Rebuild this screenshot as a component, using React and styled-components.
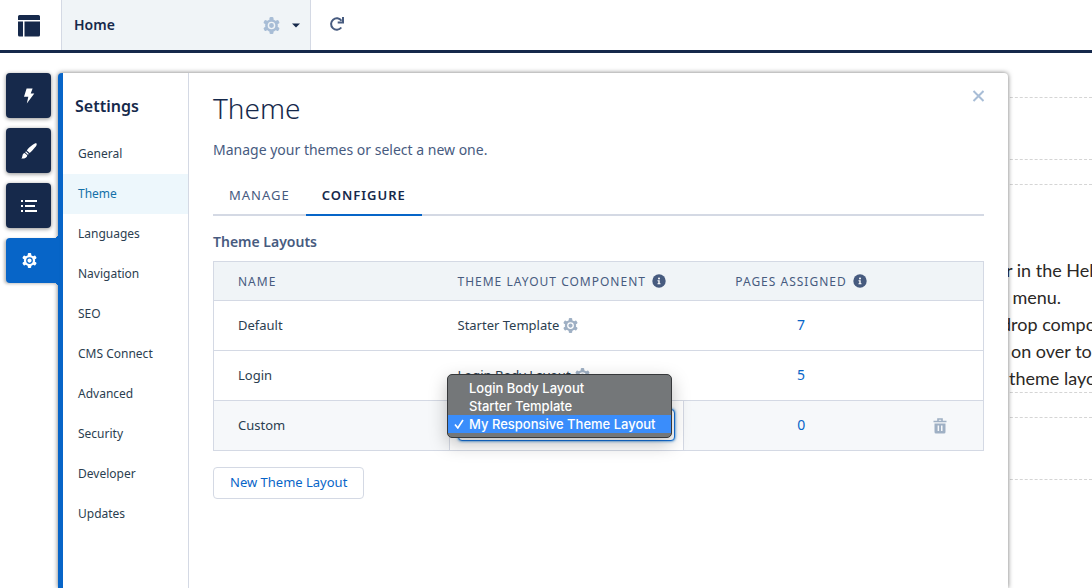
import React, { useState } from "react";
import styled, { createGlobalStyle, css } from "styled-components";

const navy = "#16294b";
const blue = "#0765c8";
const slate = "#475b7f";
const line = "#d4d9e4";

const GlobalStyle = createGlobalStyle`
  * {
    box-sizing: border-box;
  }
  body {
    margin: 0;
    background: #fff;
    color: #2b3e50;
    font-family: "Noto Sans", sans-serif;
    font-size: 13px;
    line-height: 20px;
  }
  button {
    font: inherit;
    border: 0;
    padding: 0;
    background: none;
    cursor: pointer;
  }
  a {
    text-decoration: none;
  }
`;

const Page = styled.div`
  display: flex;
  flex-direction: column;
  height: 100vh;
  overflow: hidden;
`;

const Header = styled.header`
  display: flex;
  flex: none;
  height: 53px;
  border-bottom: 3px solid ${navy};
`;

const Brand = styled.a`
  display: flex;
  align-items: center;
  justify-content: center;
  width: 61px;
  padding: 2px 3px 0 0;
  color: ${navy};
`;

const PageTab = styled.div`
  display: flex;
  align-items: center;
  width: 250px;
  padding: 0 10px 0 12px;
  border: solid ${line};
  border-width: 0 1px;
  background: #f0f4f7;
`;

const PageName = styled.span`
  flex: 1;
  color: ${navy};
  font-size: 14px;
  font-weight: 600;
`;

const IconButton = styled.button`
  display: inline-flex;
  align-items: center;
  justify-content: center;
  vertical-align: middle;
  color: ${(props) => props.$color || "#a8bdd6"};
`;

const CaretButton = styled(IconButton)`
  margin-left: 12px;
`;

const RefreshButton = styled(IconButton)`
  margin-left: 18px;
  padding-bottom: 2px;
`;

const Workspace = styled.div`
  display: flex;
  flex: 1;
  min-height: 0;
`;

const Rail = styled.nav`
  display: flex;
  flex: none;
  flex-direction: column;
  gap: 10px;
  width: 58px;
  padding: 20px 0 0 6px;
`;

const RailButton = styled.button`
  display: flex;
  align-items: center;
  justify-content: center;
  width: 45px;
  height: 45px;
  border-radius: 4px;
  background: ${navy};
  color: #fff;
  box-shadow: 0 1px 4px rgba(0, 0, 0, 0.45);

  ${(props) =>
    props.$active &&
    css`
      position: relative;
      z-index: 2;
      width: 53px;
      padding-right: 7px;
      border-radius: 4px 0 0 4px;
      background: ${blue};
      box-shadow: -2px 1px 3px rgba(0, 0, 0, 0.25);

      &::before,
      &::after {
        content: "";
        position: absolute;
        right: 1px;
        width: 4px;
        height: 4px;
      }
      &::before {
        top: -4px;
        background: radial-gradient(circle at 0 0, transparent 4px, ${blue} 4px);
      }
      &::after {
        bottom: -4px;
        background: radial-gradient(circle at 0 100%, transparent 4px, ${blue} 4px);
      }
    `}
`;

const Panel = styled.section`
  position: relative;
  z-index: 1;
  display: flex;
  flex: 1;
  min-width: 0;
  margin-top: 20px;
  border-left: 5px solid ${blue};
  border-radius: 4px 4px 0 0;
  background: #fff;
  box-shadow: 0 0 5px rgba(0, 0, 0, 0.55);
`;

const SideNav = styled.nav`
  flex: none;
  width: 126px;
  padding-top: 20px;
  border-right: 1px solid ${line};
`;

const SideTitle = styled.h2`
  margin: 0 0 15px;
  padding-left: 12px;
  color: ${navy};
  font-size: 16px;
  line-height: 26px;
  font-weight: 600;
`;

const SideLink = styled.a`
  display: block;
  padding-left: 15px;
  font-size: 12px;
  line-height: 40px;
  color: ${(props) => (props.$active ? "#1470a8" : "#2b3e50")};
  background: ${(props) => (props.$active ? "#edf7fc" : "transparent")};
`;

const Content = styled.div`
  flex: 1;
  min-width: 0;
  padding: 15px 24px;
`;

const TitleRow = styled.div`
  display: flex;
  justify-content: space-between;
  align-items: flex-start;
`;

const Title = styled.h1`
  margin: 0;
  color: ${navy};
  font-size: 28px;
  line-height: 40px;
  font-weight: 300;
`;

const Intro = styled.p`
  margin: 12px 0 14px;
  color: ${slate};
  font-size: 14px;
`;

const Tabs = styled.div`
  display: flex;
  border-bottom: 2px solid ${line};
`;

const Tab = styled.button`
  margin-bottom: -2px;
  padding: 11px 16px 9px;
  border-bottom: 2px solid ${(props) => (props.$active ? blue : "transparent")};
  color: ${(props) => (props.$active ? navy : slate)};
  font-weight: ${(props) => (props.$active ? 600 : 400)};
  letter-spacing: 1px;
  text-transform: uppercase;
`;

const SectionTitle = styled.h3`
  margin: 16px 0 9px;
  color: ${slate};
  font-size: 14px;
  font-weight: 600;
`;

const Table = styled.table`
  width: 100%;
  table-layout: fixed;
  border-collapse: collapse;
  border: 1px solid ${line};
`;

const Th = styled.th`
  height: 39px;
  padding: 2px 0 0 ${(props) => props.$pad || 0}px;
  background: #f0f4f7;
  color: ${slate};
  font-size: 12px;
  font-weight: 400;
  letter-spacing: 1px;
  text-align: ${(props) => props.$align || "left"};
  text-transform: uppercase;
  white-space: nowrap;

  svg {
    margin-left: 6px;
    vertical-align: -2px;
  }
`;

const Row = styled.tr`
  background: ${(props) => (props.$selected ? "#f6f8fa" : "#fff")};
`;

const Td = styled.td`
  height: 50px;
  padding: 0 0 2px ${(props) => props.$pad || 0}px;
  border-top: 1px solid ${line};
  text-align: ${(props) => props.$align || "left"};

  a {
    color: ${blue};
    font-size: 14px;
  }
`;

const EditCell = styled(Td)`
  position: relative;
  padding: 0 8px 2px;
  border: 1px solid ${line};
  background: #fff;
`;

const WithIcon = styled.span`
  display: flex;
  align-items: center;
  gap: 4px;

  button {
    padding-top: 2px;
  }
`;

const LayoutSelect = styled.select`
  display: block;
  appearance: none;
  width: 100%;
  height: 32px;
  padding: 0 12px;
  border: 1px solid #1570d8;
  border-radius: 4px;
  outline: 0;
  background: #fff;
  color: #fff;
  font: inherit;
  box-shadow: 0 0 3px #0070d2;
`;

const Options = styled.ul`
  position: absolute;
  z-index: 3;
  top: -27px;
  left: -3px;
  width: 225px;
  margin: 0;
  padding: 4px 0;
  list-style: none;
  border: 1px solid #36383a;
  border-radius: 5px;
  background: #747779;
  box-shadow: 0 6px 18px rgba(0, 0, 0, 0.25);
`;

const Option = styled.li`
  display: flex;
  align-items: center;
  height: 18px;
  color: #fff;
  background: ${(props) => (props.$checked ? "#3a8dfb" : "transparent")};
  font-family: Inter, sans-serif;
  font-size: 13px;
  font-weight: 500;
  line-height: 16px;
  white-space: nowrap;
`;

const Tick = styled.span`
  display: flex;
  flex: none;
  justify-content: center;
  width: 21px;
`;

const NewButton = styled.button`
  height: 32px;
  margin-top: 16px;
  padding: 0 16px 2px;
  border: 1px solid ${line};
  border-radius: 4px;
  color: ${blue};
`;

const Canvas = styled.main`
  flex: none;
  width: 92px;
  margin-left: -8px;
  padding-top: 44px;
  overflow: hidden;
`;

const Region = styled.div`
  min-height: 63px;
  margin-bottom: 24px;
  padding-top: ${(props) => (props.$filled ? 72 : 0)}px;
  border: dashed #d5d5d5;
  border-width: 1px 0;
`;

const CanvasText = styled.p`
  margin: 0;
  padding-left: ${(props) => props.$indent}px;
  color: #2b2826;
  font-family: Lato, sans-serif;
  font-size: 18px;
  line-height: 27px;
  white-space: nowrap;
`;

// round body with three bars through the centre, which give the six teeth
function GearIcon({ size, hole = "#fff" }) {
  return (
    <svg width={size} height={size} viewBox="-9 -9 18 18" aria-hidden="true">
      <circle r="6.7" fill="currentColor" />
      {[0, 60, 120].map((angle) => (
        <rect
          key={angle}
          x="-2.1"
          y="-9"
          width="4.2"
          height="18"
          rx="1.3"
          fill="currentColor"
          transform={`rotate(${angle})`}
        />
      ))}
      <circle r="3.3" fill="none" stroke={hole} strokeWidth="1.5" />
    </svg>
  );
}

function InfoIcon() {
  return (
    <svg width="14" height="14" viewBox="0 0 14 14" aria-hidden="true">
      <circle cx="7" cy="7" r="6.7" fill={slate} />
      <circle cx="7" cy="4.4" r="1" fill="#fff" />
      <path d="M5.5 6.2h2.2v3h.8v1h-3v-1h.8v-2h-.8z" fill="#fff" />
    </svg>
  );
}

function BrandIcon() {
  return (
    <svg width="22" height="22" viewBox="0 0 22 22" fill="currentColor" aria-hidden="true">
      <path d="M1.5 0h19A1.5 1.5 0 0 1 22 1.5V5H0V1.5A1.5 1.5 0 0 1 1.5 0zM0 6.5h5v15H1.5A1.5 1.5 0 0 1 0 20zM6.5 6.5H22V20a1.5 1.5 0 0 1-1.5 1.5h-14z" />
    </svg>
  );
}

function RefreshIcon() {
  return (
    <svg width="16" height="16" viewBox="0 0 16 16" aria-hidden="true">
      <path d="M12.3 11.5A5.7 5.7 0 1 1 12.5 4.8" fill="none" stroke="currentColor" strokeWidth="2" />
      <path d="M13 1h2v6.5H8.7v-2H13z" fill="currentColor" />
    </svg>
  );
}

function BoltIcon() {
  return (
    <svg width="12" height="16" viewBox="0 0 12 16" fill="currentColor" aria-hidden="true">
      <path d="M3.6.5h6L7.7 5.6h3.6L3.8 15.5l1.5-6.7H1z" />
    </svg>
  );
}

function BrushIcon() {
  return (
    <svg width="16" height="16" viewBox="0 0 16 16" fill="currentColor" aria-hidden="true">
      <path d="M15.5.5c.6.7-.2 2.3-1.2 3.6-1.5 2-3.9 4.7-5.6 6L5.8 7.4C7.2 5.4 9.7 3.2 11.7 1.8 13.2.7 14.9-.1 15.5.5zM5 8.3l2.800 2.600-.9.8L4.200 9.200zM3.6 10l2.6 2.3c.1 2.3-2.5 3.4-5.9 3.2 1.2-1.2.8-2.1 1.3-3.5.3-1 1.1-1.700 2-2z" />
    </svg>
  );
}

function ListIcon() {
  return (
    <svg width="16" height="12" viewBox="0 0 16 12" fill="currentColor" aria-hidden="true">
      <path d="M0 0h2v2H0zM4 0h12v2H4zM0 5h2v2H0zM4 5h10v2H4zM0 10h2v2H0zM4 10h12v2H4z" />
    </svg>
  );
}

function TrashIcon() {
  return (
    <svg width="14" height="16" viewBox="0 0 14 16" aria-hidden="true">
      <path d="M.5 3.5h13M5 3V1h4v2" fill="none" stroke="currentColor" strokeWidth="1.6" />
      <path
        d="M1.5 5.500h11V14a1.5 1.5 0 0 1-1.5 1.5H3A1.5 1.5 0 0 1 1.5 14zM4.6 7.5V13h1.5V7.5zM8 7.5V13h1.5V7.5z"
        fill="currentColor"
        fillRule="evenodd"
      />
    </svg>
  );
}

const sections = [
  "General",
  "Theme",
  "Languages",
  "Navigation",
  "SEO",
  "CMS Connect",
  "Advanced",
  "Security",
  "Developer",
  "Updates",
];

const layouts = [
  { name: "Default", component: "Starter Template", pages: 7 },
  { name: "Login", component: "Login Body Layout", pages: 5 },
];

const options = ["Login Body Layout", "Starter Template", "My Responsive Theme Layout"];

const copy = [
  { text: "r in the Hel", indent: 6 },
  { text: "s menu.", indent: 0 },
  { text: "drop compo", indent: 1 },
  { text: "on over to", indent: 11 },
  { text: "theme layo", indent: 9 },
];

function App() {
  const [choice, setChoice] = useState(options[2]);

  return (
    <>
      <GlobalStyle />
      <Page>
        <Header>
          <Brand href="#home" aria-label="Builder">
            <BrandIcon />
          </Brand>
          <PageTab>
            <PageName>Home</PageName>
            <IconButton aria-label="Page settings">
              <GearIcon size={17} hole="#f0f4f7" />
            </IconButton>
            <CaretButton aria-label="Choose page" $color={navy}>
              <svg width="8" height="5" viewBox="0 0 8 5" aria-hidden="true">
                <path d="M0 .5h8L4 4.5z" fill="currentColor" />
              </svg>
            </CaretButton>
          </PageTab>
          <RefreshButton aria-label="Refresh" $color={slate}>
            <RefreshIcon />
          </RefreshButton>
        </Header>
        <Workspace>
          <Rail>
            <RailButton aria-label="Components">
              <BoltIcon />
            </RailButton>
            <RailButton aria-label="Branding">
              <BrushIcon />
            </RailButton>
            <RailButton aria-label="Page structure">
              <ListIcon />
            </RailButton>
            <RailButton aria-label="Settings" $active>
              <GearIcon size={15} hole={blue} />
            </RailButton>
          </Rail>
          <Panel>
            <SideNav>
              <SideTitle>Settings</SideTitle>
              {sections.map((name) => (
                <SideLink key={name} href={"#" + name} $active={name === "Theme"}>
                  {name}
                </SideLink>
              ))}
            </SideNav>
            <Content>
              <TitleRow>
                <Title>Theme</Title>
                <IconButton aria-label="Close">
                  <svg width="12" height="15" viewBox="0 0 12 15" aria-hidden="true">
                    <path d="M1.5 3l10 10M11.5 3l-10 10" stroke="currentColor" strokeWidth="2" />
                  </svg>
                </IconButton>
              </TitleRow>
              <Intro>Manage your themes or select a new one.</Intro>
              <Tabs role="tablist">
                <Tab role="tab">Manage</Tab>
                <Tab role="tab" aria-selected="true" $active>
                  Configure
                </Tab>
              </Tabs>
              <SectionTitle>Theme Layouts</SectionTitle>
              <Table>
                <colgroup>
                  <col />
                  <col style={{ width: 234 }} />
                  <col style={{ width: 235 }} />
                  <col style={{ width: 65 }} />
                </colgroup>
                <thead>
                  <tr>
                    <Th $pad={24}>Name</Th>
                    <Th $pad={8}>
                      Theme Layout Component
                      <InfoIcon />
                    </Th>
                    <Th $align="center">
                      Pages Assigned
                      <InfoIcon />
                    </Th>
                    <Th aria-label="Actions" />
                  </tr>
                </thead>
                <tbody>
                  {layouts.map((layout) => (
                    <Row key={layout.name}>
                      <Td $pad={24}>{layout.name}</Td>
                      <Td $pad={8}>
                        <WithIcon>
                          {layout.component}
                          <IconButton aria-label={layout.component + " settings"} $color="#9fb0c4">
                            <GearIcon size={15} />
                          </IconButton>
                        </WithIcon>
                      </Td>
                      <Td $align="center">
                        <a href="#pages">{layout.pages}</a>
                      </Td>
                      <Td />
                    </Row>
                  ))}
                  <Row $selected>
                    <Td $pad={24}>Custom</Td>
                    <EditCell>
                      <LayoutSelect
                        aria-label="Theme layout component"
                        value={choice}
                        onChange={(e) => setChoice(e.target.value)}
                      >
                        {options.map((name) => (
                          <option key={name}>{name}</option>
                        ))}
                      </LayoutSelect>
                      <Options role="listbox">
                        {options.map((name) => (
                          <Option
                            key={name}
                            role="option"
                            aria-selected={name === choice}
                            $checked={name === choice}
                            onClick={() => setChoice(name)}
                          >
                            <Tick>
                              {name === choice && (
                                <svg width="10" height="10" viewBox="0 0 10 10" aria-hidden="true">
                                  <path d="M1 5.5L3.8 9 9 1" fill="none" stroke="#fff" strokeWidth="1.6" />
                                </svg>
                              )}
                            </Tick>
                            {name}
                          </Option>
                        ))}
                      </Options>
                    </EditCell>
                    <Td $align="center">
                      <a href="#pages">0</a>
                    </Td>
                    <Td $pad={14}>
                      <IconButton aria-label="Delete layout" $color="#9fb0c4">
                        <TrashIcon />
                      </IconButton>
                    </Td>
                  </Row>
                </tbody>
              </Table>
              <NewButton>New Theme Layout</NewButton>
            </Content>
          </Panel>
          <Canvas>
            <Region />
            <Region $filled>
              {copy.map((row) => (
                <CanvasText key={row.text} $indent={row.indent}>
                  {row.text}
                </CanvasText>
              ))}
            </Region>
            <Region />
          </Canvas>
        </Workspace>
      </Page>
    </>
  );
}

export default App;
